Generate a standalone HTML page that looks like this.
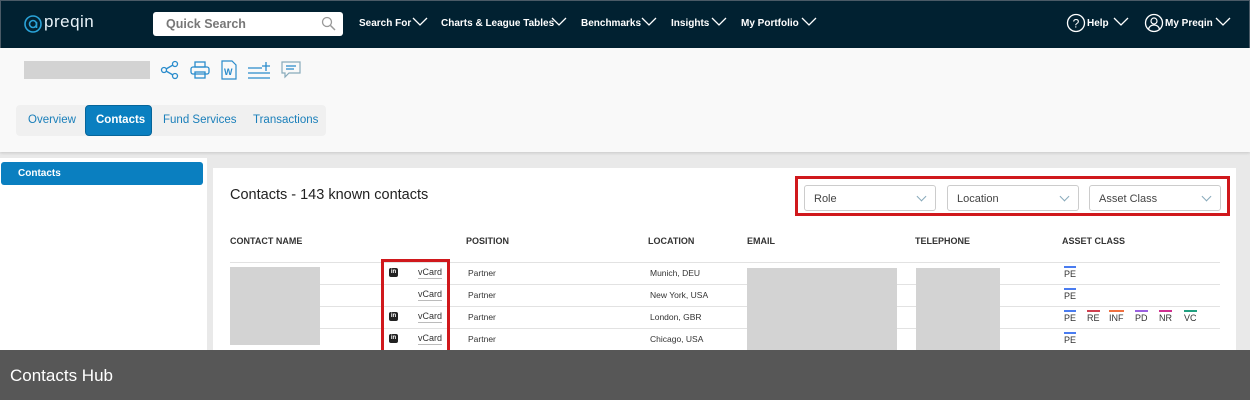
<!DOCTYPE html>
<html><head><meta charset="utf-8"><style>
*{margin:0;padding:0;box-sizing:border-box}
body{width:1250px;height:400px;overflow:hidden;font-family:"Liberation Sans",sans-serif;background:#e9e9e9;position:relative}
.hdr{position:absolute;left:0;top:0;width:1250px;height:48px;background:#012131;border:1px solid #4a5a66;border-bottom:none}
.abs{position:absolute}
.nav{color:#fff;font-size:10px;font-weight:bold;top:18px;position:absolute}
.cv{position:absolute;top:17px}
.top{position:absolute;left:0;top:48px;width:1250px;height:104px;background:#f9f9f9;box-shadow:0 1px 3px rgba(0,0,0,.15)}
.tab{position:absolute;top:114px;font-size:11.5px;color:#1a7fba}
.side{position:absolute;left:0;top:158px;width:207px;height:200px;background:#fff}
.card{position:absolute;left:213px;top:168px;width:1023px;height:200px;background:#fff}
.th{position:absolute;top:236px;font-size:9px;font-weight:bold;color:#333}
.row{position:absolute;left:230px;width:990px;height:1px;background:#e2e2e2}
.td{position:absolute;font-size:8.5px;color:#333}
.li{position:absolute;left:389px;width:9px;height:9px;background:#222;border-radius:2px;color:#fff;font-size:6px;font-weight:bold;text-align:center;line-height:9px}
.vc{position:absolute;left:418px;font-size:9px;color:#333;border-bottom:1px solid #bbb;line-height:11px}
.ac{position:absolute;font-size:9px;color:#333;border-top:2px solid #4a7cf0;line-height:10px;padding-top:1px}
.sel{position:absolute;top:185px;width:132px;height:26px;border:1px solid #ccc;border-radius:3px;font-size:11px;color:#444;padding:7px 0 0 9px;background:#fff}
.sel:after{content:"";position:absolute;right:10px;top:7px;width:6px;height:6px;border-right:1px solid #8ab;border-bottom:1px solid #8ab;transform:rotate(45deg)}
.ph{position:absolute;background:#d3d3d3}
</style></head><body>
<div class="hdr"></div>
<svg class="abs" style="left:23px;top:14px" width="20" height="20" viewBox="0 0 20 20"><circle cx="10" cy="10" r="8" fill="none" stroke="#2aa3d8" stroke-width="1.6"/><circle cx="10" cy="10" r="3.5" fill="none" stroke="#2aa3d8" stroke-width="1.6"/><path d="M13.5 8v6" stroke="#2aa3d8" stroke-width="1.6"/></svg>
<div class="abs" style="left:44px;top:12px;color:#e8f2f8;font-size:17px;letter-spacing:.5px">preqin</div>
<div class="abs" style="left:153px;top:12px;width:190px;height:24px;background:#fff;border-radius:3px"></div>
<div class="abs" style="left:166px;top:17px;font-size:12.5px;font-weight:bold;color:#777">Quick Search</div>
<svg class="abs" style="left:321px;top:16px" width="16" height="16" viewBox="0 0 16 16"><circle cx="6" cy="6" r="4.5" fill="none" stroke="#999" stroke-width="1.3"/><path d="M9.5 9.5l4.5 4.5" stroke="#999" stroke-width="1.5"/></svg>
<div class="nav" style="left:359px">Search For</div>
<div class="nav" style="left:441px">Charts &amp; League Tables</div>
<div class="nav" style="left:581px">Benchmarks</div>
<div class="nav" style="left:671px">Insights</div>
<div class="nav" style="left:741px">My Portfolio</div>
<div class="nav" style="left:1087px">Help</div>
<div class="nav" style="left:1165px">My Preqin</div>
<svg class="cv" style="left:412px" width="16" height="10"><path d="M1 1l7 7 7-7" fill="none" stroke="#fff" stroke-width="1.3"/></svg>
<svg class="cv" style="left:551px" width="16" height="10"><path d="M1 1l7 7 7-7" fill="none" stroke="#fff" stroke-width="1.3"/></svg>
<svg class="cv" style="left:641px" width="16" height="10"><path d="M1 1l7 7 7-7" fill="none" stroke="#fff" stroke-width="1.3"/></svg>
<svg class="cv" style="left:711px" width="16" height="10"><path d="M1 1l7 7 7-7" fill="none" stroke="#fff" stroke-width="1.3"/></svg>
<svg class="cv" style="left:801px" width="16" height="10"><path d="M1 1l7 7 7-7" fill="none" stroke="#fff" stroke-width="1.3"/></svg>
<svg class="cv" style="left:1113px" width="16" height="10"><path d="M1 1l7 7 7-7" fill="none" stroke="#fff" stroke-width="1.3"/></svg>
<svg class="cv" style="left:1215px" width="16" height="10"><path d="M1 1l7 7 7-7" fill="none" stroke="#fff" stroke-width="1.3"/></svg>
<svg class="abs" style="left:1066px;top:13px" width="20" height="20"><circle cx="10" cy="10" r="8.5" fill="none" stroke="#fff" stroke-width="1.3"/><text x="10" y="14.5" font-size="12" fill="#fff" text-anchor="middle" font-family="Liberation Sans">?</text></svg>
<svg class="abs" style="left:1144px;top:13px" width="20" height="20"><circle cx="10" cy="10" r="8.5" fill="none" stroke="#fff" stroke-width="1.3"/><circle cx="10" cy="8" r="3" fill="none" stroke="#fff" stroke-width="1.2"/><path d="M4.5 16c1-3 3-4 5.5-4s4.5 1 5.5 4" fill="none" stroke="#fff" stroke-width="1.2"/></svg>

<div class="top"></div>
<div class="ph" style="left:24px;top:61px;width:126px;height:18px"></div>
<svg class="abs" style="left:160px;top:60px" width="20" height="20" fill="none" stroke="#2a8ccc" stroke-width="1.3"><circle cx="15" cy="4" r="2.5"/><circle cx="4" cy="10" r="2.5"/><circle cx="15" cy="16" r="2.5"/><path d="M6 9l7-4M6 11l7 4"/></svg>
<svg class="abs" style="left:190px;top:61px" width="20" height="18" fill="none" stroke="#2a8ccc" stroke-width="1.3"><rect x="5" y="1" width="10" height="5"/><rect x="1" y="6" width="18" height="7" rx="2"/><rect x="5" y="11" width="10" height="6"/></svg>
<svg class="abs" style="left:221px;top:60px" width="16" height="20" fill="none" stroke="#2a8ccc" stroke-width="1.2"><path d="M1 1h10l4 4v14H1z"/><text x="3" y="15" font-size="9" font-weight="bold" fill="#2a8ccc" stroke="none" font-family="Liberation Sans">W</text></svg>
<svg class="abs" style="left:247px;top:60px" width="24" height="20" stroke="#2a8ccc" stroke-width="1.3"><path d="M1 8h14M1 13h22M1 18h22M19 2v9M15 6h8"/></svg>
<svg class="abs" style="left:281px;top:61px" width="20" height="18" fill="none" stroke="#8ab" stroke-width="1.2"><path d="M1 1h18v11H8l-4 4v-4H1z"/><path d="M5 5h10M5 8h8" stroke="#2a8ccc"/></svg>
<div class="abs" style="left:16px;top:105px;width:310px;height:31px;background:#f0f0f0;border-radius:4px"></div>
<div class="abs" style="left:85px;top:105px;width:67px;height:31px;background:#0a7fc0;border-radius:4px;border:1px solid #06659a"></div>
<div class="tab" style="left:28px">Overview</div>
<div class="tab" style="left:96px;color:#fff;font-weight:bold">Contacts</div>
<div class="tab" style="left:163px">Fund Services</div>
<div class="tab" style="left:253px">Transactions</div>

<div class="side"></div>
<div class="abs" style="left:1px;top:162px;width:202px;height:23px;background:#0a7fc0;border-radius:3px;color:#fff;font-size:10px;font-weight:bold;padding:6px 0 0 17px">Contacts</div>
<div class="card"></div>
<div class="abs" style="left:230px;top:187px;font-size:14.5px;color:#222">Contacts - 143 known contacts</div>
<div class="abs" style="left:795px;top:176px;width:435px;height:40px;border:3px solid #d0181c"></div>
<div class="sel" style="left:804px">Role</div>
<div class="sel" style="left:947px">Location</div>
<div class="sel" style="left:1089px">Asset Class</div>

<div class="th" style="left:230px">CONTACT NAME</div>
<div class="th" style="left:466px">POSITION</div>
<div class="th" style="left:648px">LOCATION</div>
<div class="th" style="left:747px">EMAIL</div>
<div class="th" style="left:915px">TELEPHONE</div>
<div class="th" style="left:1062px">ASSET CLASS</div>
<div class="row" style="top:262px"></div><div class="row" style="top:284px"></div><div class="row" style="top:306px"></div><div class="row" style="top:328px"></div>
<div class="ph" style="left:230px;top:267px;width:90px;height:78px"></div>
<div class="ph" style="left:747px;top:268px;width:150px;height:82px"></div>
<div class="ph" style="left:916px;top:268px;width:84px;height:82px"></div>
<div class="abs" style="left:381px;top:259px;width:69px;height:94px;border:3px solid #d0181c"></div>
<div class="li" style="top:268px">in</div><div class="li" style="top:312px">in</div><div class="li" style="top:334px">in</div>
<div class="vc" style="top:267px">vCard</div><div class="vc" style="top:289px">vCard</div><div class="vc" style="top:311px">vCard</div><div class="vc" style="top:333px">vCard</div>
<div class="td" style="left:468px;top:268px">Partner</div><div class="td" style="left:468px;top:290px">Partner</div><div class="td" style="left:468px;top:312px">Partner</div><div class="td" style="left:468px;top:334px">Partner</div>
<div class="td" style="left:650px;top:268px">Munich, DEU</div><div class="td" style="left:650px;top:290px">New York, USA</div><div class="td" style="left:650px;top:312px">London, GBR</div><div class="td" style="left:650px;top:334px">Chicago, USA</div>
<div class="ac" style="left:1064px;top:266px">PE</div><div class="ac" style="left:1064px;top:288px">PE</div>
<div class="ac" style="left:1064px;top:310px">PE</div>
<div class="ac" style="left:1087px;top:310px;border-color:#d04050">RE</div>
<div class="ac" style="left:1109px;top:310px;border-color:#f07040">INF</div>
<div class="ac" style="left:1135px;top:310px;border-color:#9a60e0">PD</div>
<div class="ac" style="left:1159px;top:310px;border-color:#d03090">NR</div>
<div class="ac" style="left:1184px;top:310px;border-color:#20a080">VC</div>
<div class="ac" style="left:1064px;top:332px">PE</div>

<div class="abs" style="left:0;top:350px;width:1250px;height:50px;background:#575757"></div>
<div class="abs" style="left:10px;top:366px;font-size:17px;color:#fff">Contacts Hub</div>
</body></html>
